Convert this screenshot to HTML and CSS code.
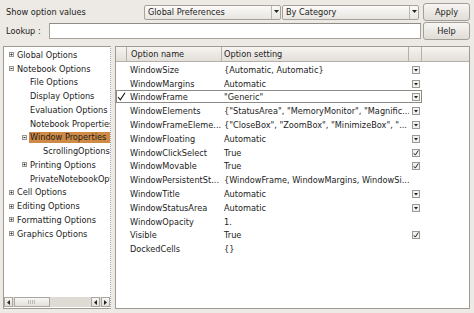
FILE: index.html
```html
<!DOCTYPE html>
<html lang="en">
<head>
  <meta charset="UTF-8" />
  <title>Option Inspector</title>
  <link rel="stylesheet" href="styles.css">
</head>
<body>

  <div class="toolbar first">
    <span class="label">Show option values</span>
    <div class="combo wide"><span class="combo-text">Global Preferences</span><span class="combo-arrow"><svg width="5" height="4"><path d="M0 0h5L2.5 3z" fill="#222"/></svg></span></div>
    <div class="combo wide gap"><span class="combo-text">By Category</span><span class="combo-arrow"><svg width="5" height="4"><path d="M0 0h5L2.5 3z" fill="#222"/></svg></span></div>
    <button class="btn">Apply</button>
  </div>

  <div class="toolbar second">
    <span class="label short">Lookup :</span>
    <input class="lookup" type="text">
    <button class="btn">Help</button>
  </div>

  <div class="main">
    <div class="tree">
      <div class="tree-list">
        <div class="node lv0"><span class="exp"><svg width="5" height="5"><rect x=".5" y=".5" width="4" height="4" fill="#f4f3f1" stroke="#9a968f"/><path d="M1.5 2.5h2M2.5 1.5v2" stroke="#333"/></svg></span><span class="name">Global Options</span></div>
        <div class="node lv0"><span class="exp"><svg width="5" height="5"><rect x=".5" y=".5" width="4" height="4" fill="#f4f3f1" stroke="#9a968f"/><path d="M1.5 2.5h2" stroke="#333"/></svg></span><span class="name">Notebook Options</span></div>
        <div class="node lv1"><span class="exp"></span><span class="name">File Options</span></div>
        <div class="node lv1"><span class="exp"></span><span class="name">Display Options</span></div>
        <div class="node lv1"><span class="exp"></span><span class="name">Evaluation Options</span></div>
        <div class="node lv1"><span class="exp"></span><span class="name">Notebook Properties</span></div>
        <div class="node lv1 selected"><span class="exp"><svg width="5" height="5"><rect x=".5" y=".5" width="4" height="4" fill="#f4f3f1" stroke="#9a968f"/><path d="M1.5 2.5h2" stroke="#333"/></svg></span><span class="name">Window Properties</span></div>
        <div class="node lv2"><span class="exp"></span><span class="name">ScrollingOptions</span></div>
        <div class="node lv1"><span class="exp"><svg width="5" height="5"><rect x=".5" y=".5" width="4" height="4" fill="#f4f3f1" stroke="#9a968f"/><path d="M1.5 2.5h2M2.5 1.5v2" stroke="#333"/></svg></span><span class="name">Printing Options</span></div>
        <div class="node lv1"><span class="exp"></span><span class="name">PrivateNotebookOptions</span></div>
        <div class="node lv0"><span class="exp"><svg width="5" height="5"><rect x=".5" y=".5" width="4" height="4" fill="#f4f3f1" stroke="#9a968f"/><path d="M1.5 2.5h2M2.5 1.5v2" stroke="#333"/></svg></span><span class="name">Cell Options</span></div>
        <div class="node lv0"><span class="exp"><svg width="5" height="5"><rect x=".5" y=".5" width="4" height="4" fill="#f4f3f1" stroke="#9a968f"/><path d="M1.5 2.5h2M2.5 1.5v2" stroke="#333"/></svg></span><span class="name">Editing Options</span></div>
        <div class="node lv0"><span class="exp"><svg width="5" height="5"><rect x=".5" y=".5" width="4" height="4" fill="#f4f3f1" stroke="#9a968f"/><path d="M1.5 2.5h2M2.5 1.5v2" stroke="#333"/></svg></span><span class="name">Formatting Options</span></div>
        <div class="node lv0"><span class="exp"><svg width="5" height="5"><rect x=".5" y=".5" width="4" height="4" fill="#f4f3f1" stroke="#9a968f"/><path d="M1.5 2.5h2M2.5 1.5v2" stroke="#333"/></svg></span><span class="name">Graphics Options</span></div>
      </div>
      <div class="hscroll">
        <span class="step"><svg width="4" height="5"><path d="M3 0v5L0 2.5z" fill="#222"/></svg></span>
        <span class="thumb"><span class="grip"></span></span>
        <span class="trough"></span>
        <span class="step"><svg width="4" height="5"><path d="M3 0v5L0 2.5z" fill="#222"/></svg></span>
        <span class="step"><svg width="4" height="5"><path d="M0 0v5L3 2.5z" fill="#222"/></svg></span>
      </div>
    </div>

    <div class="table">
      <div class="row head">
        <span class="c-check"></span>
        <span class="c-name">Option name</span>
        <span class="c-value">Option setting</span>
        <span class="c-mark"></span>
        <span class="c-fill"></span>
      </div>
      <div class="row"><span class="c-check"></span><span class="c-name">WindowSize</span><span class="c-value">{Automatic, Automatic}</span><span class="c-mark"><svg width="8" height="8"><rect x=".5" y=".5" width="7" height="7" fill="#f2f1ef" stroke="#9b9892"/><path d="M2 3h4L4 5.5z" fill="#222"/></svg></span></div>
      <div class="row"><span class="c-check"></span><span class="c-name">WindowMargins</span><span class="c-value">Automatic</span><span class="c-mark"><svg width="8" height="8"><rect x=".5" y=".5" width="7" height="7" fill="#f2f1ef" stroke="#9b9892"/><path d="M2 3h4L4 5.5z" fill="#222"/></svg></span></div>
      <div class="row focus"><span class="c-check"><svg width="9" height="9"><path d="M1 5l2.3 2.8L8 .8" fill="none" stroke="#111" stroke-width="1.1"/></svg></span><span class="c-name">WindowFrame</span><span class="c-value">"Generic"</span><span class="c-mark"><svg width="8" height="8"><rect x=".5" y=".5" width="7" height="7" fill="#f2f1ef" stroke="#9b9892"/><path d="M2 3h4L4 5.5z" fill="#222"/></svg></span></div>
      <div class="row"><span class="c-check"></span><span class="c-name">WindowElements</span><span class="c-value">{"StatusArea", "MemoryMonitor", "Magnific...</span><span class="c-mark"><svg width="8" height="8"><rect x=".5" y=".5" width="7" height="7" fill="#f2f1ef" stroke="#9b9892"/><path d="M2 3h4L4 5.5z" fill="#222"/></svg></span></div>
      <div class="row"><span class="c-check"></span><span class="c-name">WindowFrameEleme...</span><span class="c-value">{"CloseBox", "ZoomBox", "MinimizeBox", "...</span><span class="c-mark"><svg width="8" height="8"><rect x=".5" y=".5" width="7" height="7" fill="#f2f1ef" stroke="#9b9892"/><path d="M2 3h4L4 5.5z" fill="#222"/></svg></span></div>
      <div class="row"><span class="c-check"></span><span class="c-name">WindowFloating</span><span class="c-value">Automatic</span><span class="c-mark"><svg width="8" height="8"><rect x=".5" y=".5" width="7" height="7" fill="#f2f1ef" stroke="#9b9892"/><path d="M2 3h4L4 5.5z" fill="#222"/></svg></span></div>
      <div class="row"><span class="c-check"></span><span class="c-name">WindowClickSelect</span><span class="c-value">True</span><span class="c-mark"><svg width="8" height="8"><rect x=".5" y=".5" width="7" height="7" fill="#f2f1ef" stroke="#9b9892"/><path d="M1.8 4.3l1.5 1.8 3-4.6" fill="none" stroke="#222"/></svg></span></div>
      <div class="row"><span class="c-check"></span><span class="c-name">WindowMovable</span><span class="c-value">True</span><span class="c-mark"><svg width="8" height="8"><rect x=".5" y=".5" width="7" height="7" fill="#f2f1ef" stroke="#9b9892"/><path d="M1.8 4.3l1.5 1.8 3-4.6" fill="none" stroke="#222"/></svg></span></div>
      <div class="row"><span class="c-check"></span><span class="c-name">WindowPersistentSt...</span><span class="c-value">{WindowFrame, WindowMargins, WindowSi...</span><span class="c-mark"></span></div>
      <div class="row"><span class="c-check"></span><span class="c-name">WindowTitle</span><span class="c-value">Automatic</span><span class="c-mark"><svg width="8" height="8"><rect x=".5" y=".5" width="7" height="7" fill="#f2f1ef" stroke="#9b9892"/><path d="M2 3h4L4 5.5z" fill="#222"/></svg></span></div>
      <div class="row"><span class="c-check"></span><span class="c-name">WindowStatusArea</span><span class="c-value">Automatic</span><span class="c-mark"><svg width="8" height="8"><rect x=".5" y=".5" width="7" height="7" fill="#f2f1ef" stroke="#9b9892"/><path d="M2 3h4L4 5.5z" fill="#222"/></svg></span></div>
      <div class="row"><span class="c-check"></span><span class="c-name">WindowOpacity</span><span class="c-value">1.</span><span class="c-mark"></span></div>
      <div class="row"><span class="c-check"></span><span class="c-name">Visible</span><span class="c-value">True</span><span class="c-mark"><svg width="8" height="8"><rect x=".5" y=".5" width="7" height="7" fill="#f2f1ef" stroke="#9b9892"/><path d="M1.8 4.3l1.5 1.8 3-4.6" fill="none" stroke="#222"/></svg></span></div>
      <div class="row"><span class="c-check"></span><span class="c-name">DockedCells</span><span class="c-value">{}</span><span class="c-mark"></span></div>
    </div>
  </div>

</body>
</html>
```

FILE: styles.css
```css
* { margin: 0; padding: 0; box-sizing: border-box; }
body {
  width: 474px;
  height: 313px;
  overflow: hidden;
  background: #edeae5;
  color: #1c1c1c;
  font-family: "DejaVu Sans", sans-serif;
  font-size: 8.2px;
}

/* top controls */
.toolbar {
  display: flex;
  align-items: center;
  padding-left: 6px;
  height: 18px;
}
.toolbar.first { margin-top: 3px; }
.toolbar.second { margin-top: 1px; }
.label { width: 138px; }
.label.short { width: 43px; }
.combo {
  display: flex;
  align-items: center;
  height: 15px;
  border: 1px solid #a6a29b;
  border-radius: 2px;
  background: linear-gradient(#fbfaf9, #e8e5e0);
}
.combo.wide { width: 137px; }
.combo.gap { margin-left: 1px; }
.combo-text { flex: 1; padding-left: 3px; white-space: nowrap; }
.combo-arrow {
  width: 9px;
  height: 100%;
  display: flex;
  align-items: center;
  justify-content: center;
  border-left: 1px solid #bcb8b1;
}
.btn {
  width: 47px;
  height: 18px;
  margin-left: 4px;
  border: 1px solid #a39f98;
  border-radius: 3px;
  background: linear-gradient(#f7f6f4, #e0dcd6);
  font: inherit;
  color: inherit;
}
.toolbar.second .btn { margin-left: 2px; }
.lookup {
  width: 372px;
  height: 16px;
  border: 1px solid #a6a29b;
  border-top-color: #8f8b85;
  background: #fff;
}

/* panes */
.main {
  display: flex;
  gap: 4px;
  height: 263px;
  margin-top: 6px;
  padding-left: 3px;
}
.tree {
  width: 108px;
  display: flex;
  flex-direction: column;
  background: #fff;
  border: 1px solid #9e9a94;
  border-right: 1px dotted #a39fb4;
}
.tree-list { flex: 1; overflow: hidden; padding-top: 1px; }
.node {
  display: flex;
  align-items: center;
  height: 13.75px;
  white-space: nowrap;
}
.node.lv0 { padding-left: 0; }
.node.lv1 { padding-left: 13px; }
.node.lv2 { padding-left: 26px; }
.exp {
  width: 13px;
  flex-shrink: 0;
  display: flex;
  align-items: center;
  padding-left: 5px;
}
.name {
  flex: 1;
  overflow: hidden;
  height: 11px;
  line-height: 11px;
  margin-top: 1px;
}
.node.selected .name {
  background: #cf8a46;
  margin-left: -1px;
  padding-left: 1px;
}

.hscroll {
  display: flex;
  height: 10px;
  margin-bottom: 1px;
  background: #dedad4;
}
.step {
  width: 9px;
  display: flex;
  align-items: center;
  justify-content: center;
  border: 1px solid #aaa6a0;
  background: linear-gradient(#f7f6f4, #e2ded8);
}
.thumb {
  width: 36px;
  margin-left: 1px;
  display: flex;
  align-items: center;
  justify-content: center;
  border: 1px solid #aaa6a0;
  background: linear-gradient(#f7f6f4, #e4e0da);
}
.grip {
  width: 8px;
  height: 4px;
  background: repeating-linear-gradient(90deg, #bdb9b2 0 1px, transparent 1px 2px);
}
.trough { flex: 1; }
.step + .step { margin-left: 1px; }

/* option table */
.table {
  flex: 1;
  max-width: 355px;
  background: #fff;
  border: 1px solid #9e9a94;
}
.row {
  display: flex;
  align-items: center;
  width: 306px;
  height: 13.8px;
  padding-top: 2px;
  white-space: nowrap;
}
.row span { flex-shrink: 0; overflow: hidden; }
.c-check { width: 11px; display: flex; justify-content: center; }
.c-name { width: 95px; padding-left: 3px; }
.c-value { width: 187px; padding-left: 2px; }
.c-mark { width: 13px; display: flex; justify-content: center; }
.row.head {
  width: auto;
  height: 15px;
  padding-top: 0;
  align-items: stretch;
  background: linear-gradient(#f6f4f1, #e3dfd9);
  border-bottom: 1px solid #b4afa8;
}
.row.head span {
  display: flex;
  align-items: center;
  border-right: 1px solid #b4afa8;
}
.row.head .c-name { padding-left: 4px; }
.row.head .c-value { padding-left: 2px; }
.row.head .c-fill { flex: 1; border-right: 0; }
.row.focus { box-shadow: inset 0 0 0 1px #8e8b86; }
.row.focus .c-check, .row.focus .c-mark { margin-top: -1px; }
```
